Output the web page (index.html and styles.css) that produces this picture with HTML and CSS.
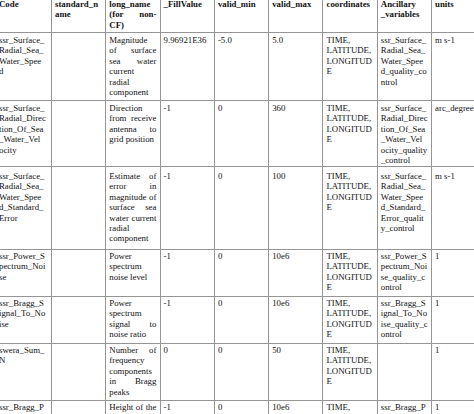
FILE: index.html
```html
<!DOCTYPE html>
<html>
<head>
<meta charset="utf-8">
<link rel="stylesheet" href="styles.css">
</head>
<body>
<div class="frame">
<table class="vars">
<colgroup>
<col class="c1"><col class="cn"><col class="cn"><col class="cn"><col class="cn"><col class="cn"><col class="cn"><col class="cn"><col class="c9">
</colgroup>
<tr class="r1">
<th>Code</th><th>standard_n<br>ame</th><th>long_name (for non-CF)</th><th>_FillValue</th><th>valid_min</th><th>valid_max</th><th>coordinates</th><th>Ancillary<br>_variables</th><th>units</th>
</tr>
<tr class="r2">
<td>ssr_Surface_<br>Radial_Sea_<br>Water_Spee<br>d</td><td></td><td>Magnitude of surface sea water current radial component</td><td>9.96921E36</td><td>-5.0</td><td>5.0</td><td>TIME,<br>LATITUDE,<br>LONGITUD<br>E</td><td>ssr_Surface_<br>Radial_Sea_<br>Water_Spee<br>d_quality_co<br>ntrol</td><td>m s-1</td>
</tr>
<tr class="r3">
<td>ssr_Surface_<br>Radial_Direc<br>tion_Of_Sea<br>_Water_Vel<br>ocity</td><td></td><td>Direction from receive antenna to grid position</td><td>-1</td><td>0</td><td>360</td><td>TIME,<br>LATITUDE,<br>LONGITUD<br>E</td><td>ssr_Surface_<br>Radial_Direc<br>tion_Of_Sea<br>_Water_Vel<br>ocity_quality<br>_control</td><td>arc_degree</td>
</tr>
<tr class="r4">
<td>ssr_Surface_<br>Radial_Sea_<br>Water_Spee<br>d_Standard_<br>Error</td><td></td><td>Estimate of error in magnitude of surface sea water current radial component</td><td>-1</td><td>0</td><td>100</td><td>TIME,<br>LATITUDE,<br>LONGITUD<br>E</td><td>ssr_Surface_<br>Radial_Sea_<br>Water_Spee<br>d_Standard_<br>Error_qualit<br>y_control</td><td>m s-1</td>
</tr>
<tr class="r5">
<td>ssr_Power_S<br>pectrum_Noi<br>se</td><td></td><td>Power spectrum noise level</td><td>-1</td><td>0</td><td>10e6</td><td>TIME,<br>LATITUDE,<br>LONGITUD<br>E</td><td>ssr_Power_S<br>pectrum_Noi<br>se_quality_c<br>ontrol</td><td>1</td>
</tr>
<tr class="r6">
<td>ssr_Bragg_S<br>ignal_To_No<br>ise</td><td></td><td>Power spectrum signal to noise ratio</td><td>-1</td><td>0</td><td>10e6</td><td>TIME,<br>LATITUDE,<br>LONGITUD<br>E</td><td>ssr_Bragg_S<br>ignal_To_No<br>ise_quality_c<br>ontrol</td><td>1</td>
</tr>
<tr class="r7">
<td>swera_Sum_<br>N</td><td></td><td>Number of frequency components in Bragg peaks</td><td>0</td><td>0</td><td>50</td><td>TIME,<br>LATITUDE,<br>LONGITUD<br>E</td><td></td><td>1</td>
</tr>
<tr class="r8">
<td>ssr_Bragg_P<br>eak_Height</td><td></td><td>Height of the Bragg peak</td><td>-1</td><td>0</td><td>10e6</td><td>TIME,<br>LATITUDE,<br>LONGITUD<br>E</td><td>ssr_Bragg_P<br>eak_Height_q<br>uality_control</td><td>1</td>
</tr>
</table>
</div>
</body>
</html>
```
FILE: styles.css
```css
html, body {
  margin: 0;
  padding: 0;
  background: #fff;
}
.frame {
  width: 474px;
  height: 414px;
  overflow: hidden;
}
.vars {
  margin: -4px 0 0 -5px;
  border-collapse: collapse;
  table-layout: fixed;
  width: 506.1px;
  font-family: "Liberation Serif", "Times New Roman", serif;
  font-size: 8.8px;
  line-height: 10.4px;
  color: #111;
}
.c1 { width: 56px; }
.cn { width: 54.3px; }
.c9 { width: 70px; }
.vars th, .vars td {
  border: 1px solid #959595;
  padding: 1px 3.2px 0 3px;
  vertical-align: top;
  text-align: justify;
  overflow-wrap: anywhere;
}
.vars th:first-child, .vars td:first-child {
  padding-right: 4.9px;
}
.vars th {
  font-weight: bold;
  padding-top: 2px;
}
.r1 { height: 36px; }
.r2 { height: 68px; }
.r3 { height: 66px; }
.r4 { height: 83px; }
.r5 { height: 47px; }
.r6 { height: 47px; }
.r7 { height: 57px; }
.r8 { height: 60px; }
.r2 td, .r3 td { padding-top: 2px; }
.r4 td { padding-top: 4px; }
```
